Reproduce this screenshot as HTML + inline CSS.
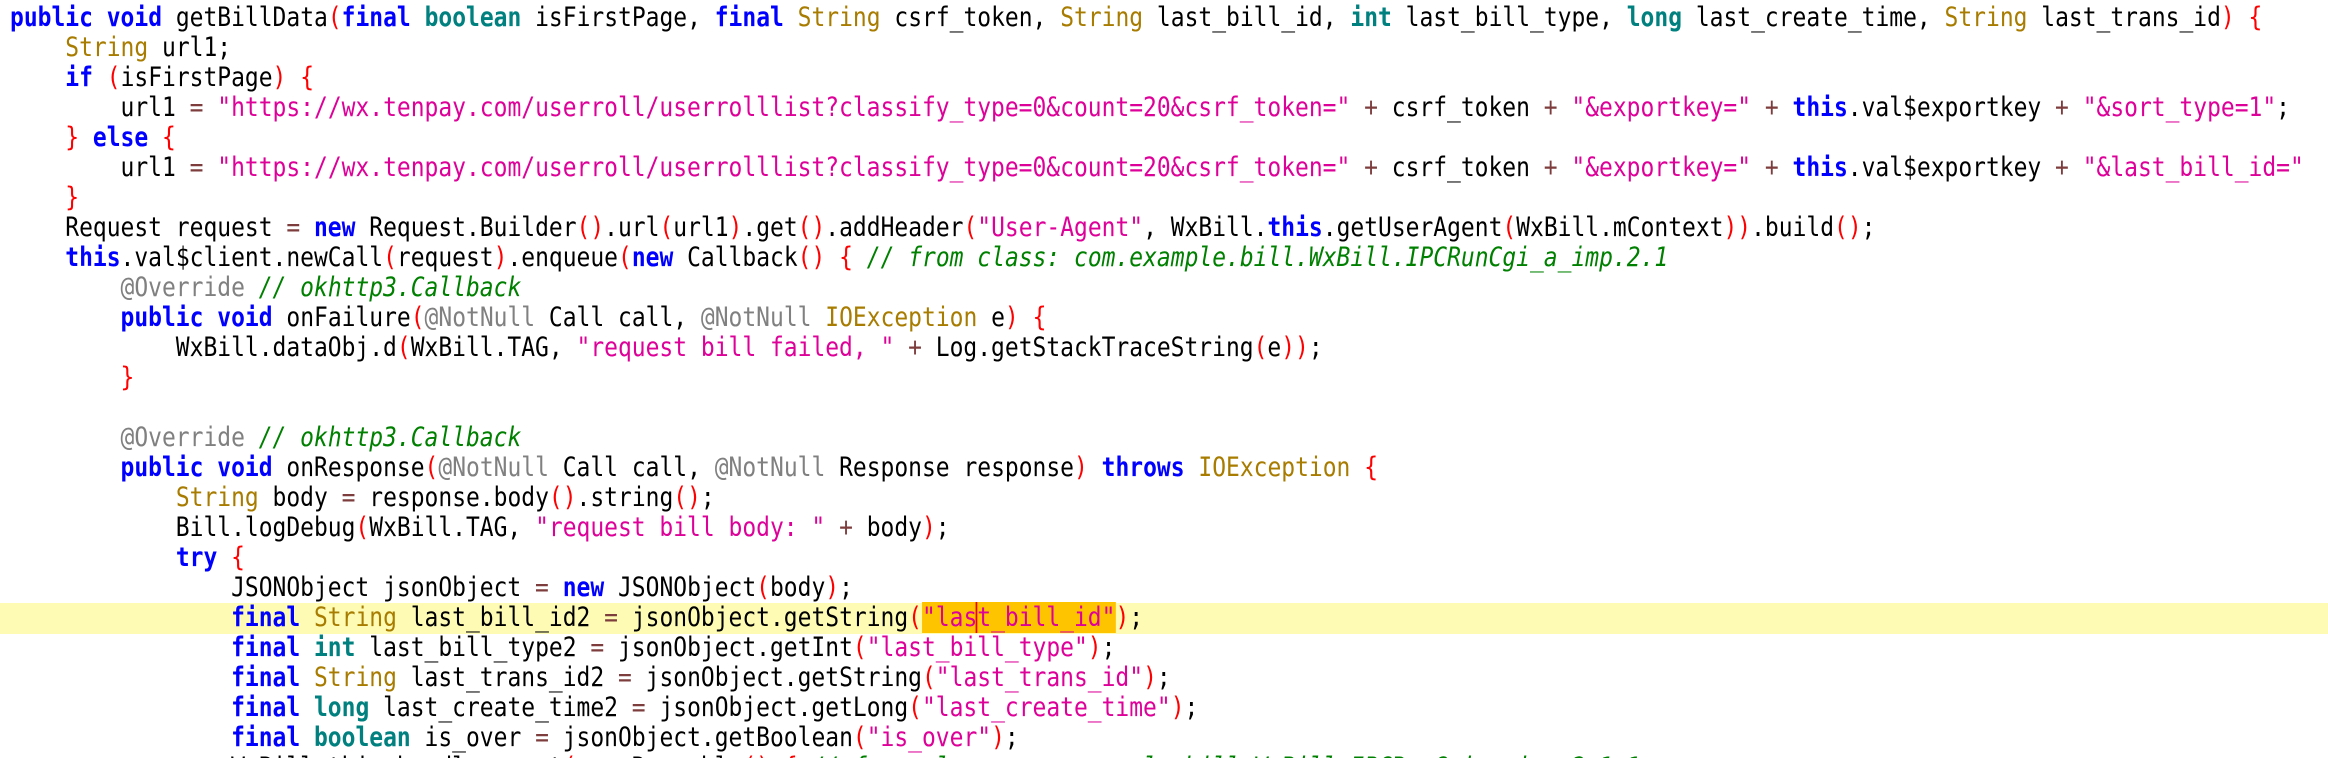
<!DOCTYPE html>
<html><head><meta charset="utf-8"><style>
html,body{margin:0;padding:0;background:#fff;width:2328px;height:758px;overflow:hidden;}
#wrap{position:relative;width:2328px;height:758px;overflow:hidden;}
.hl{position:absolute;left:0;top:603px;width:2328px;height:31px;background:#fefcb4;}
pre{position:absolute;left:10px;top:3px;margin:0;font-family:"DejaVu Sans Mono","Liberation Mono",monospace;font-size:27px;line-height:30px;color:#000;transform:scaleX(0.85);transform-origin:0 0;white-space:pre;width:2700px;overflow:hidden;}
.k{color:#0000ff;font-weight:bold}
.t{color:#00807f;font-weight:bold}
.c{color:#a87c00}
.s{color:#dd0099}
.p{color:#f00}
.o{color:#7d3d3d}
.a{color:#808080}
.m{color:#008000;font-style:italic}
.sel{background:#ffc400}
.cur{border-left:2px solid #e00;margin-left:-2px}
</style></head><body><div id="wrap">
<div class="hl"></div>
<pre><span class="k">public</span> <span class="k">void</span> getBillData<span class="p">(</span><span class="k">final</span> <span class="t">boolean</span> isFirstPage, <span class="k">final</span> <span class="c">String</span> csrf_token, <span class="c">String</span> last_bill_id, <span class="t">int</span> last_bill_type, <span class="t">long</span> last_create_time, <span class="c">String</span> last_trans_id<span class="p">)</span> <span class="p">{</span>
    <span class="c">String</span> url1;
    <span class="k">if</span> <span class="p">(</span>isFirstPage<span class="p">)</span> <span class="p">{</span>
        url1 <span class="o">=</span> <span class="s">"https://wx.tenpay.com/userroll/userrolllist?classify_type=0&amp;count=20&amp;csrf_token="</span> <span class="o">+</span> csrf_token <span class="o">+</span> <span class="s">"&amp;exportkey="</span> <span class="o">+</span> <span class="k">this</span>.val$exportkey <span class="o">+</span> <span class="s">"&amp;sort_type=1"</span>;
    <span class="p">}</span> <span class="k">else</span> <span class="p">{</span>
        url1 <span class="o">=</span> <span class="s">"https://wx.tenpay.com/userroll/userrolllist?classify_type=0&amp;count=20&amp;csrf_token="</span> <span class="o">+</span> csrf_token <span class="o">+</span> <span class="s">"&amp;exportkey="</span> <span class="o">+</span> <span class="k">this</span>.val$exportkey <span class="o">+</span> <span class="s">"&amp;last_bill_id="</span>
    <span class="p">}</span>
    Request request <span class="o">=</span> <span class="k">new</span> Request.Builder<span class="p">()</span>.url<span class="p">(</span>url1<span class="p">)</span>.get<span class="p">()</span>.addHeader<span class="p">(</span><span class="s">"User-Agent"</span>, WxBill.<span class="k">this</span>.getUserAgent<span class="p">(</span>WxBill.mContext<span class="p">))</span>.build<span class="p">()</span>;
    <span class="k">this</span>.val$client.newCall<span class="p">(</span>request<span class="p">)</span>.enqueue<span class="p">(</span><span class="k">new</span> Callback<span class="p">()</span> <span class="p">{</span> <span class="m">// from class: com.example.bill.WxBill.IPCRunCgi_a_imp.2.1</span>
        <span class="a">@Override</span> <span class="m">// okhttp3.Callback</span>
        <span class="k">public</span> <span class="k">void</span> onFailure<span class="p">(</span><span class="a">@NotNull</span> Call call, <span class="a">@NotNull</span> <span class="c">IOException</span> e<span class="p">)</span> <span class="p">{</span>
            WxBill.dataObj.d<span class="p">(</span>WxBill.TAG, <span class="s">"request bill failed, "</span> <span class="o">+</span> Log.getStackTraceString<span class="p">(</span>e<span class="p">))</span>;
        <span class="p">}</span>

        <span class="a">@Override</span> <span class="m">// okhttp3.Callback</span>
        <span class="k">public</span> <span class="k">void</span> onResponse<span class="p">(</span><span class="a">@NotNull</span> Call call, <span class="a">@NotNull</span> Response response<span class="p">)</span> <span class="k">throws</span> <span class="c">IOException</span> <span class="p">{</span>
            <span class="c">String</span> body <span class="o">=</span> response.body<span class="p">()</span>.string<span class="p">()</span>;
            Bill.logDebug<span class="p">(</span>WxBill.TAG, <span class="s">"request bill body: "</span> <span class="o">+</span> body<span class="p">)</span>;
            <span class="k">try</span> <span class="p">{</span>
                JSONObject jsonObject <span class="o">=</span> <span class="k">new</span> JSONObject<span class="p">(</span>body<span class="p">)</span>;
                <span class="k">final</span> <span class="c">String</span> last_bill_id2 <span class="o">=</span> jsonObject.getString<span class="p">(</span><span class="s sel">"las<span class="cur"></span>t_bill_id"</span><span class="p">)</span>;
                <span class="k">final</span> <span class="t">int</span> last_bill_type2 <span class="o">=</span> jsonObject.getInt<span class="p">(</span><span class="s">"last_bill_type"</span><span class="p">)</span>;
                <span class="k">final</span> <span class="c">String</span> last_trans_id2 <span class="o">=</span> jsonObject.getString<span class="p">(</span><span class="s">"last_trans_id"</span><span class="p">)</span>;
                <span class="k">final</span> <span class="t">long</span> last_create_time2 <span class="o">=</span> jsonObject.getLong<span class="p">(</span><span class="s">"last_create_time"</span><span class="p">)</span>;
                <span class="k">final</span> <span class="t">boolean</span> is_over <span class="o">=</span> jsonObject.getBoolean<span class="p">(</span><span class="s">"is_over"</span><span class="p">)</span>;
                WxBill.this.handler.post<span class="p">(</span><span class="k">new</span> Runnable<span class="p">()</span> <span class="p">{</span> <span class="m">// from class: com.example.bill.WxBill.IPCRunCgi_a_imp.2.1.1</span></pre>
</div></body></html>
